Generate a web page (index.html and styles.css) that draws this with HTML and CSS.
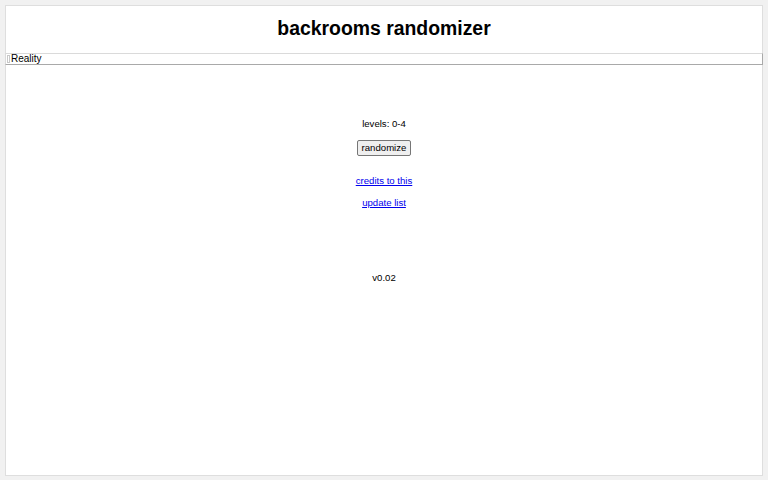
FILE: index.html
```
<!doctype html>
<html lang="en">
  <head>
    <meta charset="UTF-8" />
    <meta name="viewport" content="width=device-width, initial-scale=1.0" />
    <title>backrooms randomizer</title>
    <link rel="stylesheet" href="styles.css">
  </head>
  <body>
    <div class="page">
      <h1>backrooms randomizer</h1>
      <div class="banner"><span class="banner-icon"></span>Reality</div>
      <p class="levels">levels: 0-4</p>
      <button id="randomize">randomize</button>
      <div class="links">
        <a href="#">credits to this</a>
        <a href="#">update list</a>
      </div>
      <p class="version">v0.02</p>
    </div>
  </body>
</html>
```
FILE: styles.css
```
html,
body {
  margin: 0;
  background: #f1f1f1;
  font-family: 'Liberation Sans', Arial, sans-serif;
  color: #000;
}
body {
  padding: 5px;
}
.page {
  background: #fff;
  border: 1px solid #dedede;
  box-sizing: border-box;
  height: 471px;
  display: flex;
  flex-direction: column;
  align-items: center;
}
h1 {
  margin: 10px 0 0;
  font-size: 19.4px;
  line-height: 24px;
  font-weight: bold;
}
.banner {
  align-self: stretch;
  margin: 13px -1px 0;
  border: 1px solid #dadada;
  border-right-color: #a9a9a9;
  border-bottom-color: #a9a9a9;
  font-size: 10px;
  line-height: 10px;
  height: 10px;
  display: flex;
  align-items: center;
  gap: 1px;
  padding-left: 1px;
}
.banner-icon {
  width: 1px;
  height: 6px;
  border: 1px solid #c8c8c8;
}
.levels {
  margin: 53px 0 0;
  font-size: 9.6px;
  line-height: 12px;
}
button {
  margin-top: 10px;
  font-family: inherit;
  font-size: 9.6px;
  line-height: 12px;
  padding: 1px 4px;
  background: #efefef;
  border: 1px solid #767676;
  border-radius: 2px;
  color: #000;
}
.links {
  margin-top: 19px;
  display: flex;
  flex-direction: column;
  align-items: center;
  gap: 10px;
  font-size: 9.6px;
  line-height: 12px;
}
a {
  color: #0000ee;
}
.version {
  margin: 63px 0 0;
  font-size: 9.6px;
  line-height: 12px;
}
```
